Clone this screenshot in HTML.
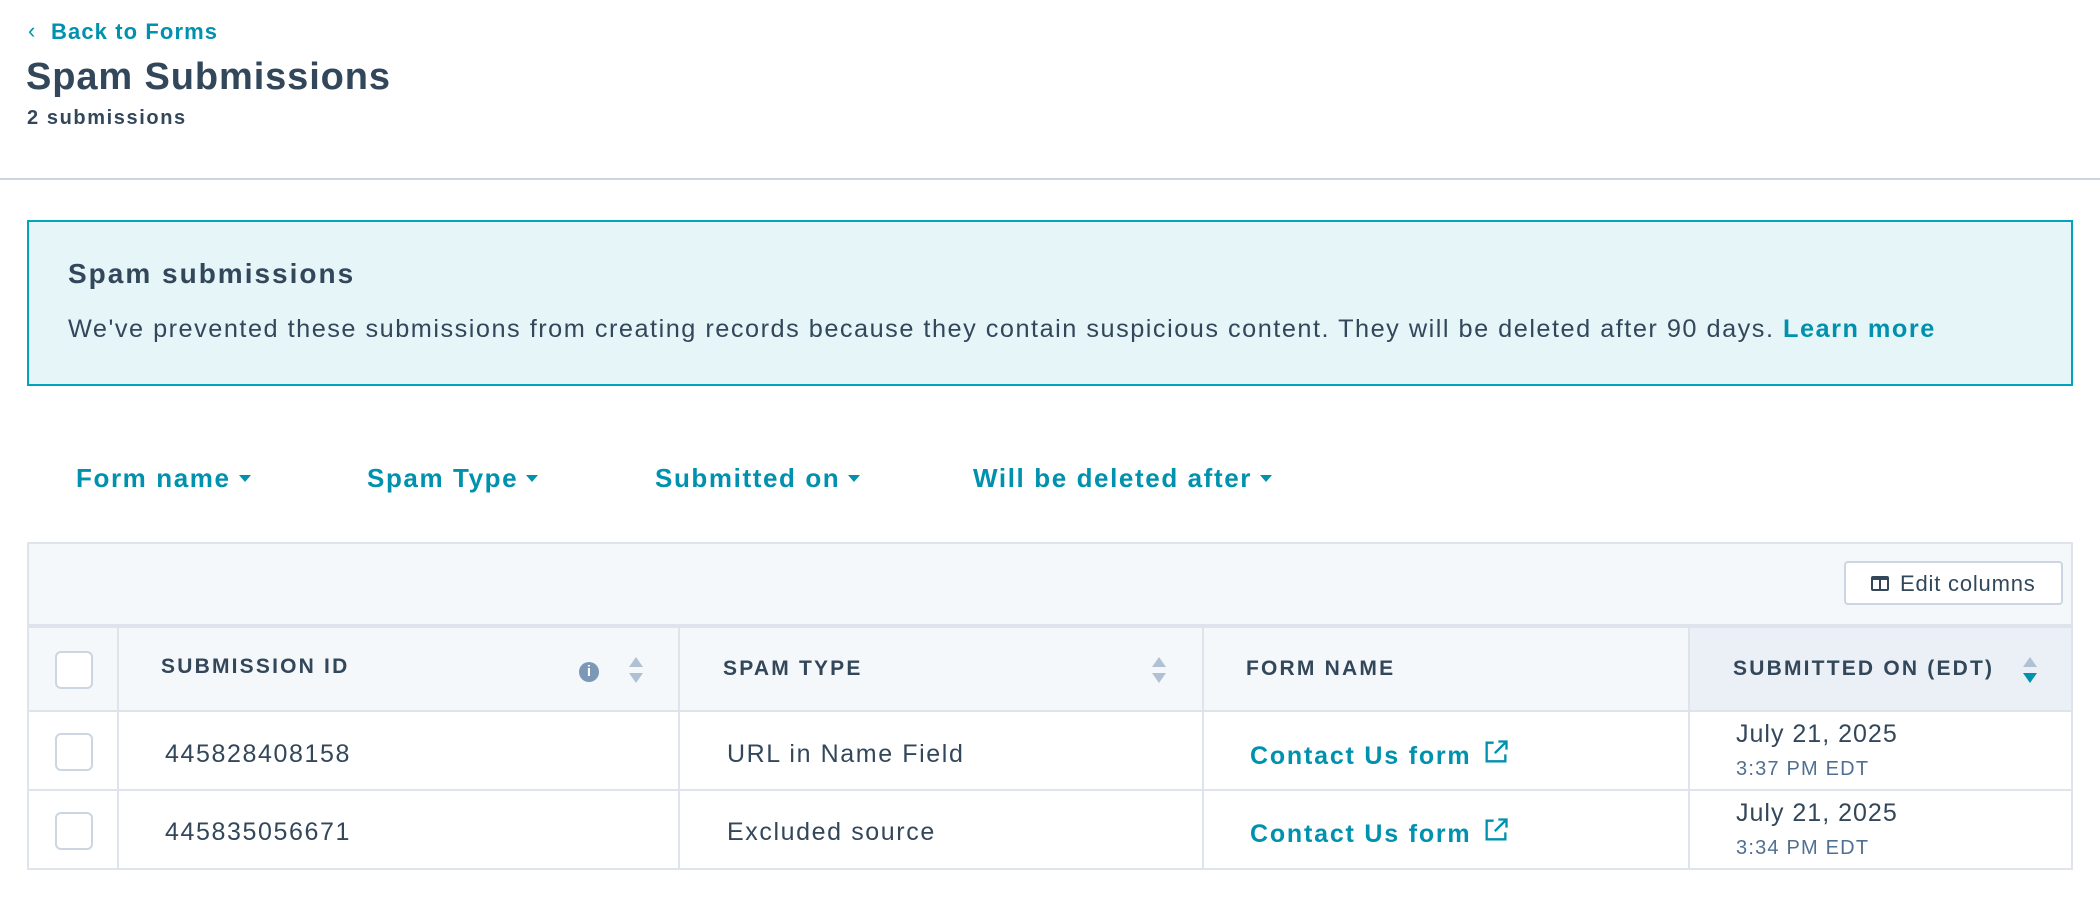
<!DOCTYPE html>
<html><head><meta charset="utf-8"><style>
*{box-sizing:border-box;margin:0;padding:0}
body{width:2100px;height:898px;background:#fff;font-family:"Liberation Sans",sans-serif;color:#33475b;position:relative;overflow:hidden}
.a{position:absolute;white-space:nowrap}
.link{color:#0091ae;font-weight:bold}
.tri{display:inline-block;width:0;height:0;border-left:6px solid transparent;border-right:6px solid transparent;border-top:7px solid #0091ae;vertical-align:middle;margin-left:8px;position:relative;top:-2px}
.hd{font-weight:bold;font-size:21px;letter-spacing:2.2px;color:#33475b}
.cb{position:absolute;width:38px;height:38px;border:2px solid #cbd6e2;border-radius:6px;background:#fff}
.vl{position:absolute;width:2px;background:#dfe3eb}
.hl{position:absolute;height:2px;background:#dfe3eb;left:27px;width:2046px}
.sort{position:absolute;width:14px;height:28px}
.sort:before{content:"";position:absolute;left:0;top:0;border-left:7px solid transparent;border-right:7px solid transparent;border-bottom:10px solid #b0c1d4}
.sort:after{content:"";position:absolute;left:0;top:16px;border-left:7px solid transparent;border-right:7px solid transparent;border-top:10px solid #b0c1d4}
.sort.act:after{border-top-color:#0091ae}
.cell{font-size:25px;letter-spacing:1.6px}
.flt{font-size:26px;letter-spacing:1.6px}
</style></head><body>
<div class="a" style="left:28px;top:18px;font-size:22px;color:#0091ae">&#8249;</div>
<div class="a link" style="left:51px;top:19px;font-size:22px;letter-spacing:1.1px">Back to Forms</div>
<div class="a" style="left:26px;top:56px;font-size:38px;font-weight:bold;letter-spacing:0.9px">Spam Submissions</div>
<div class="a" style="left:27px;top:107px;font-size:20px;font-weight:bold;letter-spacing:1.6px">2 submissions</div>
<div class="a" style="left:0;top:178px;width:2100px;height:2px;background:#cbd6e2"></div>

<div class="a" style="left:27px;top:220px;width:2046px;height:166px;background:#e5f5f8;border:2px solid #00a4bd"></div>
<div class="a" style="left:68px;top:258px;font-size:28px;font-weight:bold;letter-spacing:2px">Spam submissions</div>
<div class="a" style="left:68px;top:315px;font-size:25.3px;letter-spacing:1.5px">We've prevented these submissions from creating records because they contain suspicious content. They will be deleted after 90 days. <span class="link">Learn more</span></div>

<div class="a link flt" style="left:76px;top:463px">Form name<span class="tri"></span></div>
<div class="a link flt" style="left:367px;top:463px">Spam Type<span class="tri"></span></div>
<div class="a link flt" style="left:655px;top:463px">Submitted on<span class="tri"></span></div>
<div class="a link flt" style="left:973px;top:463px">Will be deleted after<span class="tri"></span></div>

<div class="a" style="left:27px;top:542px;width:2046px;height:328px;border:2px solid #dfe3eb;background:#fff"></div>
<div class="a" style="left:29px;top:544px;width:2042px;height:80px;background:#f5f8fa"></div>
<div class="a" style="left:1844px;top:561px;width:219px;height:44px;border:2px solid #cbd6e2;border-radius:4px;background:#fff;font-size:22px;padding:8px 0 0 54px;letter-spacing:0.8px">Edit columns</div>
<div class="a" style="left:1871px;top:576px;width:18px;height:15px;border:2px solid #33475b;border-top-width:4px;border-radius:2px"><div style="position:absolute;left:6px;top:0;width:2px;height:9px;background:#33475b"></div></div>
<div class="a" style="left:29px;top:624px;width:2042px;height:4px;background:#dfe3eb"></div>
<div class="a" style="left:29px;top:628px;width:2042px;height:82px;background:#f5f8fa"></div>
<div class="a" style="left:1689px;top:628px;width:382px;height:82px;background:#eaf0f6"></div>
<div class="hl" style="top:710px"></div>
<div class="hl" style="top:789px"></div>
<div class="vl" style="left:117px;top:628px;height:240px"></div>
<div class="vl" style="left:678px;top:628px;height:240px"></div>
<div class="vl" style="left:1202px;top:628px;height:240px"></div>
<div class="vl" style="left:1688px;top:628px;height:240px"></div>

<div class="cb" style="left:55px;top:651px"></div>
<div class="cb" style="left:55px;top:733px"></div>
<div class="cb" style="left:55px;top:812px"></div>

<div class="a hd" style="left:161px;top:655px">SUBMISSION ID</div>
<div class="a" style="left:579px;top:662px;width:20px;height:20px;border-radius:50%;background:#7c98b6;color:#fff;font-size:15px;font-weight:bold;text-align:center;line-height:20px">i</div>
<div class="sort" style="left:629px;top:657px"></div>
<div class="a hd" style="left:723px;top:657px">SPAM TYPE</div>
<div class="sort" style="left:1152px;top:657px"></div>
<div class="a hd" style="left:1246px;top:657px">FORM NAME</div>
<div class="a hd" style="left:1733px;top:657px">SUBMITTED ON (EDT)</div>
<div class="sort act" style="left:2023px;top:657px"></div>

<div class="a cell" style="left:165px;top:740px">445828408158</div>
<div class="a cell" style="left:165px;top:818px">445835056671</div>
<div class="a cell" style="left:727px;top:740px">URL in Name Field</div>
<div class="a cell" style="left:727px;top:818px">Excluded source</div>
<div class="a link cell" style="left:1250px;top:742px;letter-spacing:1.8px">Contact Us form</div>
<div class="a link cell" style="left:1250px;top:820px;letter-spacing:1.8px">Contact Us form</div>
<svg class="a" style="left:1482px;top:738px" width="28" height="28" viewBox="0 0 24 24" fill="none" stroke="#0091ae" stroke-width="2"><path d="M10 4H4v16h16v-6M14 3h7v7M21 3L11 13"/></svg>
<svg class="a" style="left:1482px;top:816px" width="28" height="28" viewBox="0 0 24 24" fill="none" stroke="#0091ae" stroke-width="2"><path d="M10 4H4v16h16v-6M14 3h7v7M21 3L11 13"/></svg>
<div class="a" style="left:1736px;top:720px;font-size:25px;letter-spacing:1px">July 21, 2025</div>
<div class="a" style="left:1736px;top:758px;font-size:20px;color:#516f90;letter-spacing:1.2px">3:37 PM EDT</div>
<div class="a" style="left:1736px;top:799px;font-size:25px;letter-spacing:1px">July 21, 2025</div>
<div class="a" style="left:1736px;top:837px;font-size:20px;color:#516f90;letter-spacing:1.2px">3:34 PM EDT</div>
</body></html>
